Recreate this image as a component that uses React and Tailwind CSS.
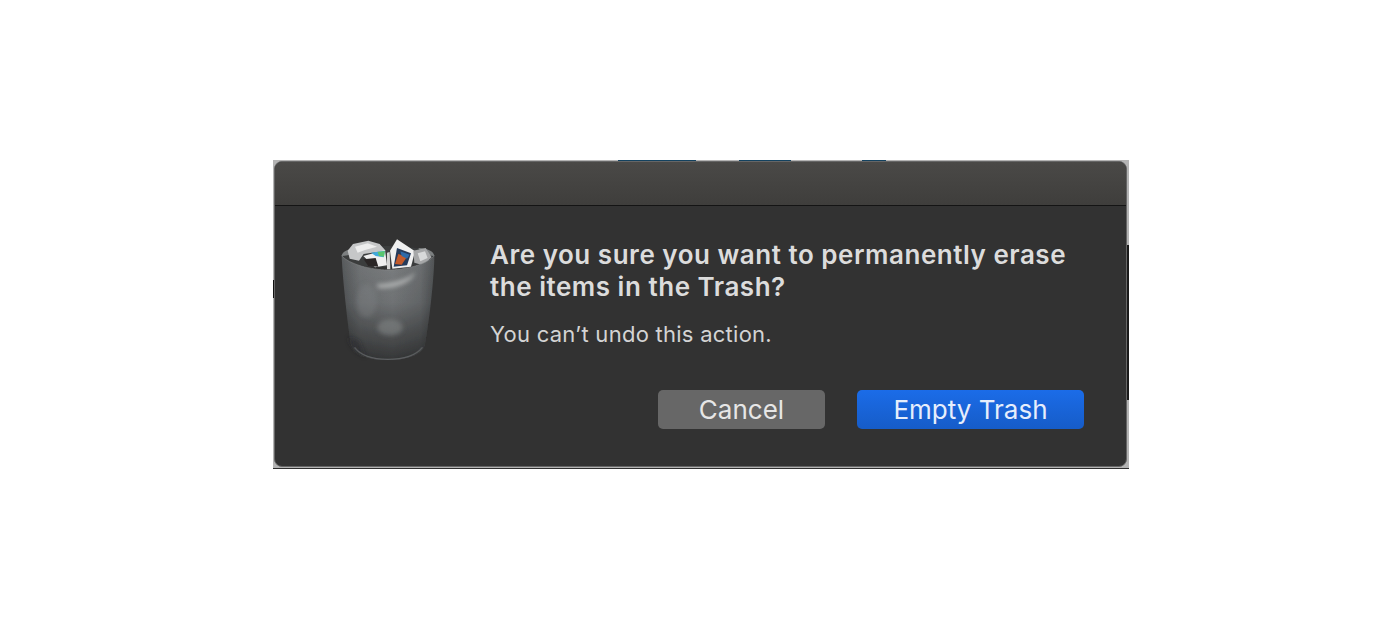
function TrashIcon() {
  const body = "M20 65 C40 90 110 108 158 108 C210 108 280 90 298 65 C298 120 285 250 270 330 C265 360 220 378 158 378 C95 378 55 360 48 330 C35 250 22 120 20 65 Z";
  return (
    <svg width="105" height="130" viewBox="0 0 315 390">
      <defs>
        <linearGradient id="can" x1="0" y1="0" x2="1" y2="0">
          <stop offset="0" stopColor="#505355" />
          <stop offset="0.2" stopColor="#6b6e70" />
          <stop offset="0.55" stopColor="#75787a" />
          <stop offset="0.85" stopColor="#66696b" />
          <stop offset="1" stopColor="#4a4d4f" />
        </linearGradient>
        <linearGradient id="shade" x1="0" y1="0" x2="0" y2="1">
          <stop offset="0" stopColor="#fff" stopOpacity="0.05" />
          <stop offset="0.45" stopColor="#000" stopOpacity="0.05" />
          <stop offset="1" stopColor="#000" stopOpacity="0.55" />
        </linearGradient>
        <filter id="soft"><feGaussianBlur stdDeviation="7" /></filter>
        <filter id="tiny"><feGaussianBlur stdDeviation="1.8" /></filter>
      </defs>
      <g filter="url(#tiny)">
        {/* inside of the can, behind the paper */}
        <ellipse cx="158" cy="68" rx="138" ry="32" fill="#3a3c3d" />
        <path d="M20 66 C22 52 40 44 70 42 L60 60 C45 62 30 66 20 66 Z" fill="#7d8081" />
        <path d="M298 66 C296 52 280 44 250 42 L262 60 C275 62 290 66 298 66 Z" fill="#7d8081" />
        {/* crumpled paper */}
        <path d="M38 50 L54 30 L100 20 L134 30 L152 50 L86 60 L72 80 L44 74 Z" fill="#c6c7c8" />
        <path d="M60 38 L98 28 L126 38 L90 48 L68 56 Z" fill="#ededed" />
        <path d="M85 66 L150 48 L156 94 L120 100 Z" fill="#efefef" />
        <path d="M108 56 L150 50 L146 70 L122 66 Z" fill="#3fa9dc" />
        <path d="M128 54 L150 51 L147 68 L132 66 Z" fill="#58c56d" />
        <path d="M86 76 L122 72 L130 98 L100 96 Z" fill="#2b2526" />
        <path d="M165 50 L186 16 L240 52 L228 98 L172 104 Z" fill="#f0f0f0" />
        <path d="M186 42 L228 58 L216 94 L176 98 Z" fill="#263a5a" />
        <path d="M190 60 L216 68 L200 92 L180 90 Z" fill="#c25a2a" />
        <path d="M196 52 L224 62 L216 74 L200 66 Z" fill="#2f6aa8" />
        <path d="M235 50 L272 42 L290 70 L264 94 L238 86 Z" fill="#a6a7a8" />
        <path d="M248 58 L270 52 L278 72 L256 82 Z" fill="#d8d9d9" />
        <path d="M156 56 L164 54 L166 106 L156 106 Z" fill="#d5d5d5" />
      </g>
      {/* frosted body */}
      <g filter="url(#tiny)">
        <path d={body} fill="url(#can)" />
        <path d={body} fill="url(#shade)" />
      </g>
      <g filter="url(#soft)">
        <path d="M125 150 C170 150 220 135 240 115 C235 140 190 165 130 162 Z" fill="#b4b6b6" opacity="0.9" />
        <ellipse cx="165" cy="280" rx="38" ry="24" fill="#8a8d8e" opacity="0.5" />
        <ellipse cx="95" cy="200" rx="30" ry="50" fill="#85888a" opacity="0.35" />
        <path d="M40 310 C45 340 70 362 90 368 L70 320 Z" fill="#2b2c2d" opacity="0.55" />
      </g>
      <path d="M58 340 C80 368 120 376 158 376 C200 376 240 368 262 340" fill="none" stroke="#6f7274" strokeWidth="4" opacity="0.7" filter="url(#tiny)" />
      <path d="M20 65 C40 90 110 108 158 108 C210 108 280 90 298 65" fill="none" stroke="#8a8d8e" strokeWidth="3" opacity="0.6" filter="url(#tiny)" />
    </svg>
  );
}

export default function App() {
  return (
    <div className="h-[627px] w-[1400px] bg-white font-['Inter','Liberation_Sans',sans-serif]">
      <div className="flex pt-[160px] pl-[273px]">
        <div className="relative h-[309px] w-[856px] bg-[#b4b4b4] pt-px pr-[2px] pb-[2px] pl-px">
          {/* bits of the desktop that show behind the sheet */}
          <div className="absolute top-0 left-[345px] h-px w-[78px] bg-[#14425f]" />
          <div className="absolute top-0 left-[466px] h-px w-[52px] bg-[#14425f]" />
          <div className="absolute top-0 left-[589px] h-px w-[24px] bg-[#14425f]" />
          <div className="absolute top-[120px] left-0 h-[18px] w-px bg-[#111111]" />
          <div className="absolute top-[85px] right-0 h-[155px] w-[2px] bg-[#1a1a1a]" />
          <div className="absolute right-0 bottom-0 left-0 h-px bg-[#2e2e2e]" />
          <div className="flex h-full flex-col overflow-hidden rounded-[8px] border border-[#666666] bg-[#323232]">
            <div className="h-[44px] shrink-0 border-b border-[#141414] bg-gradient-to-b from-[#4a4947] to-[#3f3e3c]" />
            <div className="flex flex-1 pl-[60px] pr-[42px]">
              <div className="w-[155px] shrink-0 pt-[28px]">
                <TrashIcon />
              </div>
              <div className="flex flex-1 flex-col">
                <h1 className="mt-[33px] whitespace-nowrap text-[26px] leading-[32px] font-semibold tracking-[0.52px] text-[#dcdcdc]">
                  Are you sure you want to permanently erase
                  <br />
                  the items in the Trash?
                </h1>
                <p className="mt-[17px] text-[22px] leading-[28px] tracking-[0.26px] text-[#d4d4d4]">You can’t undo this action.</p>
                <div className="mt-[42px] flex justify-end gap-[32px]">
                  <button className="h-[39px] w-[167px] rounded-[5px] bg-[#676767] text-[26px] text-[#e6e6e6]">Cancel</button>
                  <button className="h-[39px] w-[227px] rounded-[5px] bg-gradient-to-b from-[#1b6ce8] to-[#165cc8] text-[26px] text-[#e6eefc]">Empty Trash</button>
                </div>
              </div>
            </div>
          </div>
        </div>
      </div>
    </div>
  );
}
